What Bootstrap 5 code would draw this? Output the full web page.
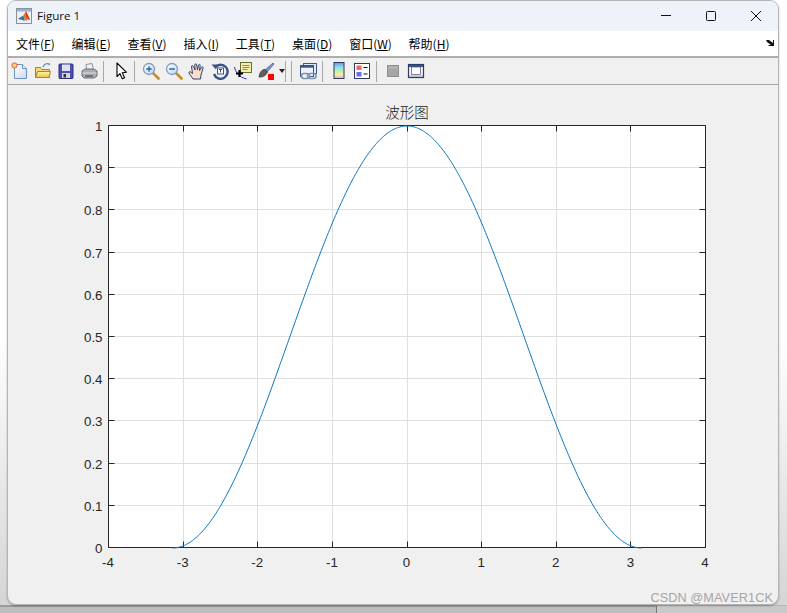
<!doctype html>
<html lang="zh">
<head>
<meta charset="utf-8">
<title>Figure 1</title>
<link href="https://cdn.jsdelivr.net/npm/bootstrap@5.3.0/dist/css/bootstrap.min.css" rel="stylesheet">
<style>
html,body{width:787px;height:613px;overflow:hidden;margin:0}
body{background:linear-gradient(180deg,#fff 0,#fff 55%,#d4d4d4 100%);font-family:"Open Sans","Noto Sans CJK SC",sans-serif;color:#111}
.fig-win{margin-left:7px;width:772px;height:605px;background:#f0f0f0;border:1px solid #b4b4b4;border-radius:9px;overflow:hidden;position:relative;box-shadow:0 1px 2px rgba(0,0,0,.25)}
.fig-title{height:30px;background:#eef3fa;padding-left:8px;font-size:11.6px;gap:5px}
.fig-ctrl{width:45px;height:30px}
.fig-menu{height:27px;background:#fff;border-bottom:2px solid #aeaeae;padding-left:8px;gap:16.8px;font-size:12px;font-family:"Noto Sans CJK SC","Liberation Sans",sans-serif;line-height:1;color:#000;font-weight:400}
.fig-menu u{text-underline-offset:1px}
.fig-overflow{right:4px;top:8px}
.fig-tools{height:27px;border-bottom:1px solid #a6a6a6;padding-left:0;background:#f0f0f0}
.slot{width:23px;height:26px}
.slot svg{display:block}
.slot-n{width:11px}
.sp{height:26px}
.sp::after{content:"";display:block;width:1px;height:21px;background:#a8a8a8}
.sp-9{width:9px;padding-left:3px}
.sp-7{width:7px;padding-left:2px}
.sp-8{width:8px;padding-left:3px}
.plot-svg{display:block;width:770px;height:519px}
.tk{font:13.3px "Liberation Sans",sans-serif;fill:#262626}
.ttl{font:14.5px "Noto Sans CJK SC",serif;fill:#1c1c1c;font-weight:300}
.wm{right:5px;bottom:-2px;font:12.7px "Liberation Sans",sans-serif;color:#a6a6a6;line-height:16px;letter-spacing:.1px}
.under-bar{height:8px;margin-top:0;background:#c4c4c4}
.under-a{width:657px;background:#bdbdbd;border-top:2px solid #9a9a9a;border-right:1px solid #777}
.under-b{background:#c9c9c9;border-top:1px solid #b5b5b5}
</style>
</head>
<body>
<svg width="0" height="0" class="position-absolute">
<defs>
<linearGradient id="gPage" x1="0" y1="0" x2="1" y2="1"><stop offset="0" stop-color="#fff"/><stop offset="1" stop-color="#c9daf2"/></linearGradient>
<linearGradient id="gFold" x1="0" y1="0" x2="0" y2="1"><stop offset="0" stop-color="#fff3b0"/><stop offset="1" stop-color="#f0c040"/></linearGradient>
<linearGradient id="gLens" x1="0" y1="0" x2="1" y2="1"><stop offset="0" stop-color="#fff"/><stop offset="1" stop-color="#b9d6f2"/></linearGradient>
<linearGradient id="gBar" x1="0" y1="0" x2="0" y2="1"><stop offset="0" stop-color="#6f8fe0"/><stop offset=".3" stop-color="#8fe0f0"/><stop offset=".55" stop-color="#bff0b0"/><stop offset=".75" stop-color="#f6eea0"/><stop offset="1" stop-color="#f6b0b0"/></linearGradient>
</defs>
</svg>

<div class="fig-win d-flex flex-column">
  <div class="fig-title d-flex align-items-center">
    <svg width="16" height="16" viewBox="0 0 16 16"><rect x=".5" y=".5" width="15" height="15" fill="#eef0f4" stroke="#8b8f98"/><rect x="1" y="1" width="14" height="2.5" fill="#8fb4dc"/><path d="M2 11l3-2 2-1 3-5 4 9-2-1-2 2-2-3z" fill="#e8742a"/><path d="M2 11l3-2 2-1 1 2 1 3-3-1z" fill="#2f79b5"/><path d="M10 3l4 9-2-1-2-4z" fill="#c9341c"/></svg>
    <span>Figure 1</span>
    <div class="ms-auto d-flex">
      <div class="fig-ctrl d-flex align-items-center justify-content-center"><svg width="12" height="12" viewBox="0 0 12 12"><path d="M1 5.500h10" stroke="#111" stroke-width="1"/></svg></div>
      <div class="fig-ctrl d-flex align-items-center justify-content-center"><svg width="12" height="12" viewBox="0 0 12 12"><rect x="1.500" y="1.500" width="9" height="9" rx="1" fill="none" stroke="#111"/></svg></div>
      <div class="fig-ctrl d-flex align-items-center justify-content-center"><svg width="12" height="12" viewBox="0 0 12 12"><path d="M1 1l10 10M11 1L1 11" stroke="#111" stroke-width="1"/></svg></div>
    </div>
  </div>
  <div class="fig-menu d-flex align-items-center position-relative">
    <span>文件(<u>F</u>)</span><span>编辑(<u>E</u>)</span><span>查看(<u>V</u>)</span><span>插入(<u>I</u>)</span><span>工具(<u>T</u>)</span><span>桌面(<u>D</u>)</span><span>窗口(<u>W</u>)</span><span>帮助(<u>H</u>)</span>
    <svg class="position-absolute fig-overflow" width="8" height="8" viewBox="0 0 8 8"><path d="M0 1h3l4 3V1l1 0v6H3l-1-1h3L1 3z" fill="#111"/></svg>
  </div>
  <div class="fig-tools d-flex align-items-center">
    <div class="slot d-flex align-items-center justify-content-center"><svg width="18" height="18" viewBox="0 0 18 18"><path d="M3.500 2.500h8l4 4v10h-12z" fill="url(#gPage)" stroke="#6f8fc0"/><path d="M11.500 2.500v4h4" fill="#e4edf9" stroke="#6f8fc0"/><circle cx="3.500" cy="3.500" r="2.600" fill="#f7d27a" stroke="#e0603a"/></svg></div>
    <div class="slot d-flex align-items-center justify-content-center"><svg width="18" height="18" viewBox="0 0 18 18"><path d="M9 5c1-3 4-4 6-3" fill="none" stroke="#6f86a8" stroke-width="1.300"/><path d="M15 .8l1.500 1.600-2.200.9z" fill="#6f86a8"/><path d="M1.500 15.500V5.500h5l1.500 2h7.500v8z" fill="#f5d878" stroke="#a5852a"/><path d="M1.500 15.500l2-6h13l-1.500 6z" fill="url(#gFold)" stroke="#a5852a"/></svg></div>
    <div class="slot d-flex align-items-center justify-content-center"><svg width="18" height="18" viewBox="0 0 18 18"><rect x="2" y="2" width="14" height="14.500" rx="1" fill="#4a4fb0" stroke="#2b2e78"/><rect x="5" y="2.500" width="8" height="6.500" fill="#dfe2f5"/><rect x="5" y="11" width="8" height="5" fill="#d6d6d6"/><rect x="6.500" y="12" width="2.500" height="3.500" fill="#333"/></svg></div>
    <div class="slot d-flex align-items-center justify-content-center"><svg width="18" height="18" viewBox="0 0 18 18"><path d="M6 2.500l6-1 1.500 6H6.500z" fill="#eef1f5" stroke="#8a9099"/><path d="M2 9l3-2h9l3 2v5l-3 2H4l-2-2z" fill="#a8acb0" stroke="#6a6d72"/><path d="M2.500 11h14" stroke="#dcdcdc"/><rect x="5" y="13" width="8" height="2" fill="#70747a"/></svg></div>
    <div class="sp sp-9 d-flex align-items-center"></div>
    <div class="slot d-flex align-items-center justify-content-center"><svg width="18" height="18" viewBox="0 0 18 18"><path d="M5 1v13.500l3-2.800 2.300 5 2.300-1-2.300-5 4.200-.4z" fill="#fff" stroke="#000" stroke-width="1.100" stroke-linejoin="round"/></svg></div>
    <div class="sp sp-7 d-flex align-items-center"></div>
    <div class="slot d-flex align-items-center justify-content-center"><svg width="18" height="18" viewBox="0 0 18 18"><path d="M11 11l5.500 5.500" stroke="#c98a2a" stroke-width="2.600" stroke-linecap="round"/><circle cx="7" cy="7" r="5.500" fill="url(#gLens)" stroke="#7f9cba" stroke-width="1.300"/><path d="M4.300 7h5.400M7 4.300v5.400" stroke="#2b5ea8" stroke-width="1.300"/></svg></div>
    <div class="slot d-flex align-items-center justify-content-center"><svg width="18" height="18" viewBox="0 0 18 18"><path d="M11 11l5.500 5.500" stroke="#c98a2a" stroke-width="2.600" stroke-linecap="round"/><circle cx="7" cy="7" r="5.500" fill="url(#gLens)" stroke="#7f9cba" stroke-width="1.300"/><path d="M4.300 7h5.400" stroke="#2b5ea8" stroke-width="1.300"/></svg></div>
    <div class="slot d-flex align-items-center justify-content-center"><svg width="18" height="18" viewBox="0 0 18 18"><path d="M5 17c-1-2-4-5-4-6.500 0-1 1.300-1 2-.3l1.500 1.300L3.500 4.500c0-1.200 1.500-1.200 1.900 0L7 8 6.800 2.800c0-1.300 1.700-1.300 1.900 0L9.500 8l1-4.800c.3-1.200 1.800-1 1.700.2l-.7 5.100 2-3.300c.6-1 2-.4 1.600.7L13 13l-.5 4z" fill="#fbdcc4" stroke="#2d3f78" stroke-linejoin="round"/></svg></div>
    <div class="slot d-flex align-items-center justify-content-center"><svg width="18" height="18" viewBox="0 0 18 18"><path d="M4 5.500A7 7 0 1 1 3 12" fill="none" stroke="#3a5488" stroke-width="2.400"/><path d="M.5 2.500l6 0-1.500 5z" fill="#3a5488"/><rect x="6.500" y="6" width="6" height="6" fill="#fff" stroke="#3a5488"/><path d="M8 7.500h3M9.500 7.500v3" stroke="#3a5488"/></svg></div>
    <div class="slot d-flex align-items-center justify-content-center"><svg width="18" height="18" viewBox="0 0 18 18"><rect x="6.500" y=".5" width="11" height="10" fill="#f4eeaa" stroke="#6b6b38"/><path d="M8.500 3.500h7M8.500 5.500h7M8.500 7.500h5" stroke="#77773f" stroke-width=".8"/><path d="M.5 5c1 5 4 10 12 12" fill="none" stroke="#2a2ad8"/><path d="M5.500 8v7M2 11.500h7" stroke="#000" stroke-width="2.200"/></svg></div>
    <div class="slot d-flex align-items-center justify-content-center"><svg width="18" height="18" viewBox="0 0 18 18"><path d="M16 1L8 8l2 2 7-8z" fill="#7f96c8" stroke="#3c4f80" stroke-width=".7"/><path d="M8 7.500c-3 0-5 2-6 7.500 3 .5 7-1 8.500-5z" fill="#5e5e5e" stroke="#2a2a2a" stroke-width=".7"/><rect x="11" y="12" width="6" height="6" fill="#f00"/></svg></div>
    <div class="slot-n sp d-flex align-items-center justify-content-center fig-drop"><svg width="6" height="4" viewBox="0 0 6 4"><path d="M0 0h6L3 4z" fill="#222"/></svg></div>
    <div class="sp sp-8 d-flex align-items-center"></div>
    <div class="slot d-flex align-items-center justify-content-center"><svg width="18" height="18" viewBox="0 0 18 18"><rect x="4.500" y="1.500" width="13" height="10" fill="#dfe8f5" stroke="#3a5488"/><rect x="1.500" y="3.500" width="13" height="11" fill="#eef3fa" stroke="#3a5488"/><rect x="1.500" y="3.500" width="13" height="2.200" fill="#3a5488"/><rect x="2.500" y="11.500" width="8" height="5" rx="2.500" fill="#eef3fa" stroke="#7f93aa" stroke-width="1.600"/><rect x="8.500" y="11.500" width="8.500" height="5" rx="2.500" fill="none" stroke="#7f93aa" stroke-width="1.600"/></svg></div>
    <div class="sp sp-8 d-flex align-items-center"></div>
    <div class="slot d-flex align-items-center justify-content-center"><svg width="18" height="18" viewBox="0 0 18 18"><rect x="4" y=".5" width="10" height="16" fill="url(#gBar)" stroke="#2d3a66"/></svg></div>
    <div class="slot d-flex align-items-center justify-content-center"><svg width="18" height="18" viewBox="0 0 18 18"><rect x="1.500" y="1.500" width="15" height="15" fill="#fff" stroke="#2d3a66"/><rect x="3.500" y="3.500" width="5" height="4.500" fill="#ee6a6a"/><rect x="3.500" y="10" width="5" height="4.500" fill="#6a6aee"/><path d="M10.500 5.500h4M10.500 12h4" stroke="#111" stroke-width="1.200"/></svg></div>
    <div class="sp sp-8 d-flex align-items-center"></div>
    <div class="slot d-flex align-items-center justify-content-center"><svg width="18" height="18" viewBox="0 0 18 18"><rect x="3.500" y="3.500" width="11" height="11" fill="#a6a6a6" stroke="#8e8e8e"/><rect x="4.500" y="4.500" width="9" height="2" fill="#b8b8b8"/></svg></div>
    <div class="slot d-flex align-items-center justify-content-center"><svg width="18" height="18" viewBox="0 0 18 18"><rect x="1.500" y="2.500" width="15" height="13" fill="#f2f2f2" stroke="#2d3a66" stroke-width="1.200"/><rect x="2" y="3" width="14" height="2" fill="#3a5488"/><rect x="4.500" y="5" width="9" height="7.500" fill="#fff" stroke="#2d3a66" stroke-width=".6"/><path d="M2.500 14h13" stroke="#9aa4bb" stroke-width="2" stroke-dasharray="1 1"/></svg></div>
  </div>
  <svg id="plot" class="plot-svg" viewBox="8 85 770 519" aria-label="波形图"></svg>
  <span class="wm position-absolute">CSDN @MAVER1CK</span>
</div>
<div class="under-bar d-flex">
  <div class="under-a"></div>
  <div class="under-b flex-grow-1"></div>
</div>
<script>
(function(){
  var L=108.5,R=705.5,T=125.5,B=547.5;
  var X=function(v){return L+(v+4)*(R-L)/8};
  var Y=function(v){return B-v*(B-T)};
  var PX=function(v){return Math.floor(X(v))+.5};
  var PY=function(v){return Math.floor(Y(v))+.5};
  var s='<rect x="'+L+'" y="'+T+'" width="'+(R-L)+'" height="'+(B-T)+'" fill="#fff"/>';
  var i,v;
  for(i=-3;i<=3;i++){s+='<path d="M'+PX(i)+' '+T+'V'+B+'" stroke="#dfdfdf"/>';}
  for(i=1;i<=9;i++){s+='<path d="M'+L+' '+PY(i/10)+'H'+R+'" stroke="#dfdfdf"/>';}
  var pts=[];
  for(i=0;i<=400;i++){v=-Math.PI+2*Math.PI*i/400;pts.push(X(v).toFixed(2)+' '+(Y(.5+.5*Math.cos(v))+.5).toFixed(2));}
  s+='<path d="M'+L+' '+T+'H'+R+'V'+B+'H'+L+'Z" fill="none" stroke="#262626"/>';
  for(i=-4;i<=4;i++){
    s+='<path d="M'+PX(i)+' '+B+'v-6M'+PX(i)+' '+T+'v6" stroke="#262626"/>';
    s+='<text class="tk" x="'+(X(i)-.5)+'" y="566.500" text-anchor="middle">'+i+'</text>';
  }
  for(i=0;i<=10;i++){
    s+='<path d="M'+L+' '+PY(i/10)+'h6M'+R+' '+PY(i/10)+'h-6" stroke="#262626"/>';
    s+='<text class="tk" x="102.500" y="'+(Y(i/10)+5.500)+'" text-anchor="end">'+(i===10?'1':i===0?'0':(i/10).toFixed(1))+'</text>';
  }
  s+='<path d="M'+pts.join('L')+'" fill="none" stroke="#0a76be" stroke-width="1"/>';
  s+='<text class="ttl" x="407" y="118" text-anchor="middle">波形图</text>';
  document.getElementById('plot').innerHTML=s;
})();
</script>
<script src="https://cdn.jsdelivr.net/npm/bootstrap@5.3.0/dist/js/bootstrap.bundle.min.js"></script>
</body>
</html>
